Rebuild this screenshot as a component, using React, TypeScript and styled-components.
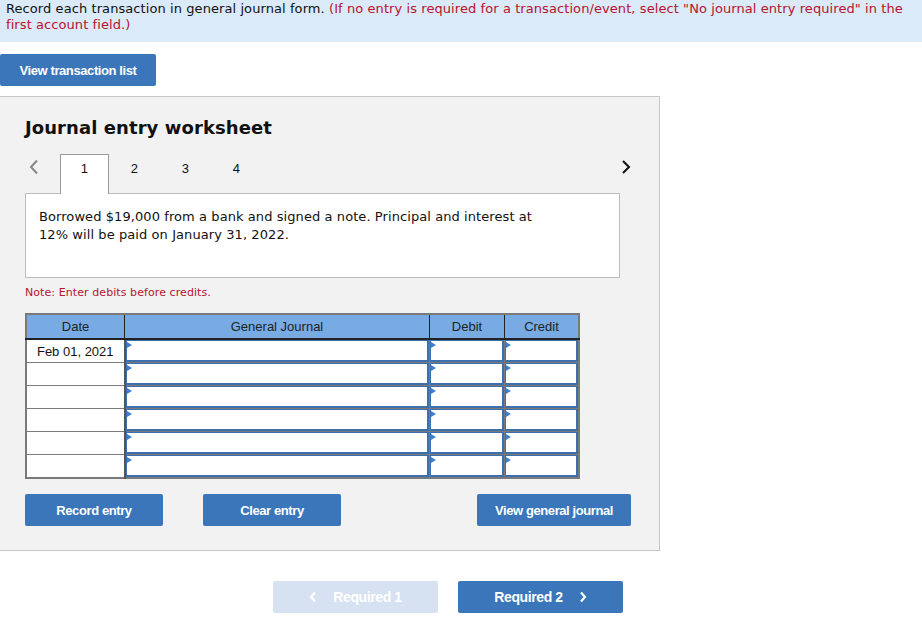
import styled, { createGlobalStyle } from "styled-components";

const GlobalStyle = createGlobalStyle`
  html, body {
    margin: 0;
    padding: 0;
    background: #ffffff;
  }
  body {
    font-family: "DejaVu Sans", Verdana, sans-serif;
    color: #111;
    letter-spacing: 0.08px;
  }
`;

const Page = styled.div`
  width: 922px;
  height: 625px;
  overflow: hidden;
`;

const Instructions = styled.p`
  margin: 0;
  background: #dbeaf8;
  padding: 1px 14px 10px 6px;
  font-size: 13px;
  line-height: 16px;
  height: 31px;
`;

const Hint = styled.span`
  color: #b8122d;
`;

const Button = styled.button<{ $width: number; $disabled?: boolean; $big?: boolean }>`
  width: ${(p) => p.$width}px;
  height: 32px;
  border: none;
  border-radius: 2px;
  background: ${(p) => (p.$disabled ? "#d6e2f1" : "#3a76b9")};
  color: #fff;
  font-family: "Liberation Sans", Arial, sans-serif;
  font-weight: bold;
  font-size: ${(p) => (p.$big ? 14 : 13)}px;
  letter-spacing: -0.4px;
  display: flex;
  align-items: center;
  justify-content: center;
  gap: ${(p) => (p.$big ? 16 : 10)}px;
  padding: 0;
  cursor: pointer;
`;

const TopBar = styled.div`
  padding: 12px 0 10px 0;
`;

const Worksheet = styled.section`
  width: 659px;
  height: 453px;
  background: #f2f2f2;
  border: 1px solid #c8c8c8;
  border-left: none;
`;

const Title = styled.h2`
  margin: 0;
  padding: 20px 0 0 25px;
  font-size: 18px;
  line-height: 22px;
  font-weight: bold;
  color: #111;
`;

const TabRow = styled.div`
  display: flex;
  align-items: flex-end;
  height: 40px;
  margin: 14px 0 0 25px;
  width: 610px;
`;

const Chevron = styled.span`
  align-self: flex-start;
  display: flex;
  align-items: center;
  justify-content: center;
  width: 18px;
  height: 28px;
`;

const Tabs = styled.div`
  display: flex;
  margin-left: 17px;
  flex: 1;
`;

const Tab = styled.div<{ $active?: boolean }>`
  width: ${(p) => (p.$active ? 49 : 51)}px;
  height: 40px;
  box-sizing: border-box;
  display: flex;
  align-items: center;
  justify-content: center;
  font-family: "Liberation Sans", Arial, sans-serif;
  font-size: 13px;
  color: #111;
  padding-bottom: 12px;
  background: ${(p) => (p.$active ? "#fff" : "transparent")};
  border: 1px solid ${(p) => (p.$active ? "#9a9a9a" : "transparent")};
  border-bottom: none;
  margin-bottom: -1px;
  position: relative;
  z-index: 1;
`;

const Description = styled.div`
  margin-left: 25px;
  width: 595px;
  height: 85px;
  box-sizing: border-box;
  background: #fff;
  border: 1px solid #bcbcbc;
  padding: 14px 13px 12px;
  font-size: 13px;
  line-height: 18px;
`;

const Note = styled.p`
  margin: 8px 0 0 25px;
  font-size: 11px;
  line-height: 14px;
  color: #b8122d;
`;

const Table = styled.table`
  margin: 13px 0 0 25px;
  border-collapse: collapse;
  font-family: "Liberation Sans", Arial, sans-serif;
  font-size: 13px;
  letter-spacing: 0;
  border: 2px solid #7a7a7a;
`;

const Th = styled.th<{ $width: number }>`
  width: ${(p) => p.$width}px;
  height: 23px;
  padding: 0;
  background: #78abe3;
  font-weight: normal;
  color: #222;
  border-right: 1px solid #222;
  border-bottom: 2px solid #222;

  &:last-child {
    border-right: none;
  }
`;

const DateCell = styled.td`
  height: 21px;
  padding: 0;
  text-align: center;
  background: #fff;
  color: #111;
  border: 1px solid #7a7a7a;
  border-right: 2px solid #555;
`;

const EntryCell = styled.td`
  height: 21px;
  padding: 0;
  background: #7a7a7a;
  border: 1px solid #7a7a7a;
`;

const EntryField = styled.div`
  position: relative;
  height: 19px;
  background: #fff;
  border: 2px solid #3e6fad;
  border-top-width: 1px;
  border-left-width: 1px;

  &::before {
    content: "";
    position: absolute;
    top: 1px;
    left: 0;
    border-top: 3px solid transparent;
    border-bottom: 3px solid transparent;
    border-left: 5px solid #3f7ed0;
  }
`;

const Actions = styled.div`
  display: flex;
  margin: 15px 0 0 25px;
  width: 606px;

  > :nth-child(2) {
    margin-left: 40px;
  }
  > :nth-child(3) {
    margin-left: auto;
  }
`;

const Footer = styled.div`
  display: flex;
  gap: 20px;
  margin: 30px 0 0 273px;
`;

const ChevronLeft = ({ color = "#888" }: { color?: string }) => (
  <svg width="10" height="16" viewBox="0 0 10 16">
    <path d="M8 1.5 L2 8 L8 14.5" stroke={color} strokeWidth="2" fill="none" />
  </svg>
);

const ChevronRight = ({ color = "#111" }: { color?: string }) => (
  <svg width="10" height="16" viewBox="0 0 10 16">
    <path d="M2 2 L8 8 L2 14" stroke={color} strokeWidth="2" fill="none" />
  </svg>
);

const SmallChevron = ({ dir, color }: { dir: "l" | "r"; color: string }) => (
  <svg width="8" height="12" viewBox="0 0 8 12">
    <path
      d={dir === "l" ? "M6 1.5 L2 6 L6 10.5" : "M2 1.5 L6 6 L2 10.5"}
      stroke={color}
      strokeWidth="2.2"
      fill="none"
    />
  </svg>
);

const rows = ["Feb 01, 2021", "", "", "", "", ""];

export default function App() {
  return (
    <Page>
      <GlobalStyle />
      <Instructions>
        Record each transaction in general journal form.{" "}
        <Hint>
          (If no entry is required for a transaction/event, select "No journal
          entry required" in the first account field.)
        </Hint>
      </Instructions>
      <TopBar>
        <Button $width={156}>View transaction list</Button>
      </TopBar>
      <Worksheet>
        <Title>Journal entry worksheet</Title>
        <TabRow>
          <Chevron>
            <ChevronLeft />
          </Chevron>
          <Tabs>
            <Tab $active>1</Tab>
            <Tab>2</Tab>
            <Tab>3</Tab>
            <Tab>4</Tab>
          </Tabs>
          <Chevron>
            <ChevronRight />
          </Chevron>
        </TabRow>
        <Description>
          Borrowed $19,000 from a bank and signed a note. Principal and interest at
          <br />
          12% will be paid on January 31, 2022.
        </Description>
        <Note>Note: Enter debits before credits.</Note>
        <Table>
          <thead>
            <tr>
              <Th $width={97}>Date</Th>
              <Th $width={304}>General Journal</Th>
              <Th $width={74}>Debit</Th>
              <Th $width={73}>Credit</Th>
            </tr>
          </thead>
          <tbody>
            {rows.map((date, i) => (
              <tr key={`row-${i}`}>
                <DateCell>{date}</DateCell>
                <EntryCell>
                  <EntryField />
                </EntryCell>
                <EntryCell>
                  <EntryField />
                </EntryCell>
                <EntryCell>
                  <EntryField />
                </EntryCell>
              </tr>
            ))}
          </tbody>
        </Table>
        <Actions>
          <Button $width={138}>Record entry</Button>
          <Button $width={138}>Clear entry</Button>
          <Button $width={154}>View general journal</Button>
        </Actions>
      </Worksheet>
      <Footer>
        <Button $width={165} $disabled $big>
          <SmallChevron dir="l" color="#fff" />
          Required 1
        </Button>
        <Button $width={165} $big>
          Required 2
          <SmallChevron dir="r" color="#fff" />
        </Button>
      </Footer>
    </Page>
  );
}
